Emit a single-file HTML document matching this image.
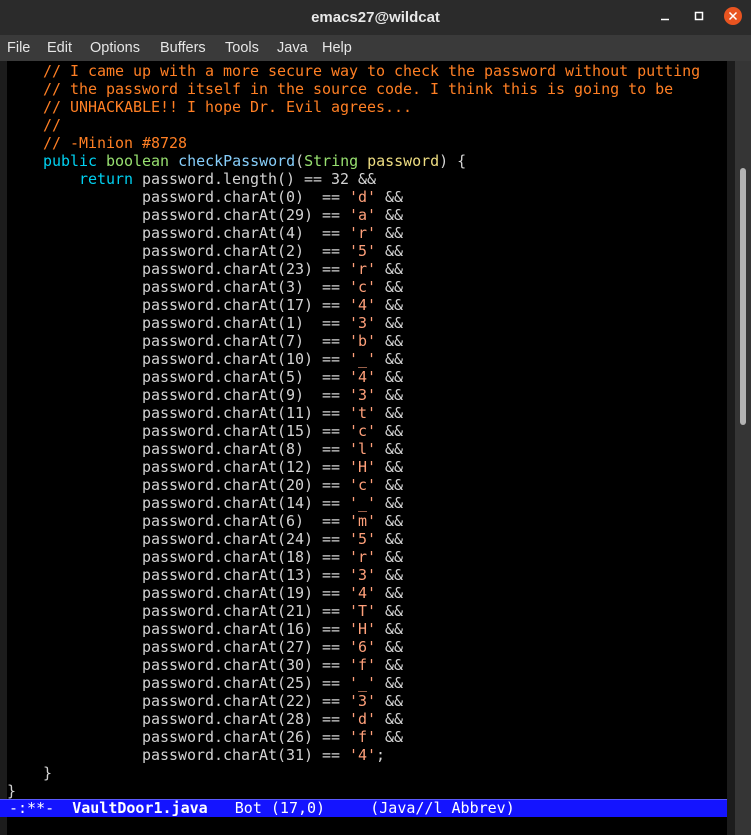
<!DOCTYPE html>
<html><head><meta charset="utf-8"><style>
body{margin:0;width:751px;height:835px;background:#000;overflow:hidden;position:relative;font-family:"Liberation Sans",sans-serif}
#title{position:absolute;left:0;top:0;width:751px;height:35px;background:#2b2b2b;color:#e8e8e8;font-weight:bold;font-size:15px;text-align:center;line-height:35px}
#menu{position:absolute;left:0;top:35px;width:751px;height:26px;background:#3a3a3a;color:#e6e6e6;font-size:14.5px;line-height:27px}
#menu span{position:absolute;top:0}
#lf{position:absolute;left:0;top:61px;width:7px;height:774px;background:#1c1c1c}
#rf{position:absolute;left:727px;top:61px;width:8px;height:774px;background:#1c1c1c}
#sb{position:absolute;left:735px;top:61px;width:16px;height:774px;background:#353535}
#thumb{position:absolute;left:740px;top:168px;width:6px;height:257px;background:#b3b3b3;border-radius:3px}
#code{position:absolute;left:7px;top:62px;margin:0;font-family:"DejaVu Sans Mono","Liberation Mono",monospace;font-size:15px;line-height:18px;color:#d3d3d3;white-space:pre;letter-spacing:-0.03px}
.c{color:#ff7f24}.k{color:#00d0f0}.t{color:#98e070}.f{color:#87cefa}.v{color:#eedd82}.s{color:#ffa07a}
#mode{position:absolute;left:0;top:799px;width:727px;height:18px;background:#1414ff;border-top:1px solid #5a5aff;box-sizing:border-box;color:#fff;font-family:"DejaVu Sans Mono","Liberation Mono",monospace;font-size:15px;line-height:17px;white-space:pre;padding-left:9px}
</style></head><body>
<div id="title">emacs27@wildcat</div>
<svg style="position:absolute;left:0;top:0" width="751" height="35">
<line x1="661" y1="19.5" x2="669" y2="19.5" stroke="#fff" stroke-width="1.5"/>
<rect x="695.5" y="12.5" width="7" height="7" fill="none" stroke="#fff" stroke-width="1.5"/>
<circle cx="733" cy="16" r="9" fill="#e95420"/>
<path d="M729.5 12.5L736.5 19.5M736.5 12.5L729.5 19.5" stroke="#fff" stroke-width="1.5"/>
</svg>
<div id="menu"><span style="left:7px">File</span><span style="left:47px">Edit</span><span style="left:90px">Options</span><span style="left:160px">Buffers</span><span style="left:225px">Tools</span><span style="left:277px">Java</span><span style="left:322px">Help</span></div>
<div id="lf"></div><div id="rf"></div><div id="sb"></div><div id="thumb"></div>
<pre id="code">    <span class="c">// I came up with a more secure way to check the password without putting</span>
    <span class="c">// the password itself in the source code. I think this is going to be</span>
    <span class="c">// UNHACKABLE!! I hope Dr. Evil agrees...</span>
    <span class="c">//</span>
    <span class="c">// -Minion #8728</span>
    <span class="k">public</span> <span class="t">boolean</span> <span class="f">checkPassword</span>(<span class="t">String</span> <span class="v">password</span>) {
        <span class="k">return</span> password.length() == 32 &amp;&amp;
               password.charAt(0)  == <span class="s">'d'</span> &amp;&amp;
               password.charAt(29) == <span class="s">'a'</span> &amp;&amp;
               password.charAt(4)  == <span class="s">'r'</span> &amp;&amp;
               password.charAt(2)  == <span class="s">'5'</span> &amp;&amp;
               password.charAt(23) == <span class="s">'r'</span> &amp;&amp;
               password.charAt(3)  == <span class="s">'c'</span> &amp;&amp;
               password.charAt(17) == <span class="s">'4'</span> &amp;&amp;
               password.charAt(1)  == <span class="s">'3'</span> &amp;&amp;
               password.charAt(7)  == <span class="s">'b'</span> &amp;&amp;
               password.charAt(10) == <span class="s">'_'</span> &amp;&amp;
               password.charAt(5)  == <span class="s">'4'</span> &amp;&amp;
               password.charAt(9)  == <span class="s">'3'</span> &amp;&amp;
               password.charAt(11) == <span class="s">'t'</span> &amp;&amp;
               password.charAt(15) == <span class="s">'c'</span> &amp;&amp;
               password.charAt(8)  == <span class="s">'l'</span> &amp;&amp;
               password.charAt(12) == <span class="s">'H'</span> &amp;&amp;
               password.charAt(20) == <span class="s">'c'</span> &amp;&amp;
               password.charAt(14) == <span class="s">'_'</span> &amp;&amp;
               password.charAt(6)  == <span class="s">'m'</span> &amp;&amp;
               password.charAt(24) == <span class="s">'5'</span> &amp;&amp;
               password.charAt(18) == <span class="s">'r'</span> &amp;&amp;
               password.charAt(13) == <span class="s">'3'</span> &amp;&amp;
               password.charAt(19) == <span class="s">'4'</span> &amp;&amp;
               password.charAt(21) == <span class="s">'T'</span> &amp;&amp;
               password.charAt(16) == <span class="s">'H'</span> &amp;&amp;
               password.charAt(27) == <span class="s">'6'</span> &amp;&amp;
               password.charAt(30) == <span class="s">'f'</span> &amp;&amp;
               password.charAt(25) == <span class="s">'_'</span> &amp;&amp;
               password.charAt(22) == <span class="s">'3'</span> &amp;&amp;
               password.charAt(28) == <span class="s">'d'</span> &amp;&amp;
               password.charAt(26) == <span class="s">'f'</span> &amp;&amp;
               password.charAt(31) == <span class="s">'4'</span>;
    }
}</pre>
<div id="mode">-:**-  <b>VaultDoor1.java</b>   Bot (17,0)     (Java//l Abbrev)</div>
</body></html>
